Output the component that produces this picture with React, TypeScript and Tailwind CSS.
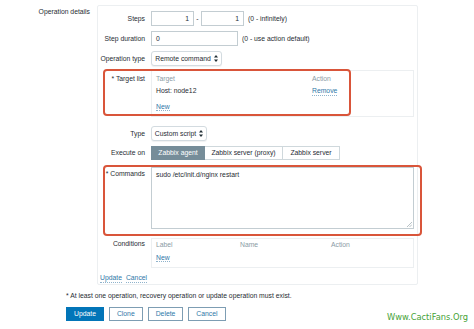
import type { ReactNode } from 'react';

function Arrows() {
  return (
    <svg width="4" height="7" viewBox="0 0 4 7" className="ml-[3px]" aria-hidden="true">
      <path d="M2 0 L4 2.6 L0 2.6 Z" fill="#1f2c33" />
      <path d="M2 7 L4 4.4 L0 4.4 Z" fill="#1f2c33" />
    </svg>
  );
}

function Select({ label, width }: { label: string; width: string }) {
  return (
    <div
      className={`${width} h-[15px] flex items-center justify-center rounded-[3px] border border-[#d3dbe0] bg-white shadow-[0_1px_1px_rgba(0,0,0,0.06)]`}
    >
      {label}
      <Arrows />
    </div>
  );
}

function Row({ label, children, className = '' }: { label: ReactNode; children: ReactNode; className?: string }) {
  return (
    <div className={`flex ${className}`}>
      <div className="w-[47px] shrink-0 text-right">{label}</div>
      <div className="ml-[6px] flex-1">{children}</div>
    </div>
  );
}

function Link({ children }: { children: ReactNode }) {
  return <span className="text-[#2f78a8] border-b border-dotted border-[#8fb3cc] leading-[8px]">{children}</span>;
}

export default function App() {
  return (
    <div className="relative w-[474px] h-[329px] overflow-hidden bg-white font-['Liberation_Sans',Arial,sans-serif] text-[6.8px] leading-[8px] text-[#1f2c33]">
      <div className="flex pt-[5px]">
        <div className="w-[97px] shrink-0 pr-[7px] pt-[3px] text-right">Operation details</div>

        <div className="w-[321px] h-[280px] border border-[#eceff1] rounded-[2px] flex flex-col">
          <Row label="Steps" className="mt-[5px] items-center">
            <div className="flex items-center">
              <div className="w-[43px] h-[15px] border border-[#c3cdd2] flex items-center justify-end pr-[4px]">1</div>
              <span className="w-[7px] text-center">-</span>
              <div className="w-[43px] h-[15px] border border-[#c3cdd2] flex items-center justify-end pr-[4px]">1</div>
              <span className="ml-[4px]">(0 - infinitely)</span>
            </div>
          </Row>

          <Row label="Step duration" className="mt-[5px] items-center">
            <div className="flex items-center">
              <div className="w-[87px] h-[15px] border border-[#c3cdd2] flex items-center pl-[4px]">0</div>
              <span className="ml-[4px]">(0 - use action default)</span>
            </div>
          </Row>

          <Row label="Operation type" className="mt-[5px] items-center">
            <Select label="Remote command" width="w-[71px]" />
          </Row>

          <Row label={<span className="block pt-[5px]">* Target list</span>} className="mt-[4px]">
            <div className="h-[47px] mr-[3px] border border-[#eceff1] pl-[4px] pt-[4px]">
              <div className="flex text-[#8a9ba5]">
                <span className="w-[156px]">Target</span>
                <span>Action</span>
              </div>
              <div className="flex mt-[4px]">
                <span className="w-[156px]">Host: node12</span>
                <Link>Remove</Link>
              </div>
              <div className="mt-[7px]">
                <Link>New</Link>
              </div>
            </div>
          </Row>

          <Row label="Type" className="mt-[9px] items-center">
            <Select label="Custom script" width="w-[56px]" />
          </Row>

          <Row label="Execute on" className="mt-[5px] items-center">
            <div className="flex h-[14px]">
              <div className="w-[54px] flex items-center justify-center bg-[#768d99] text-white border border-[#768d99]">Zabbix agent</div>
              <div className="w-[78px] flex items-center justify-center border border-l-0 border-[#cfd8dc]">Zabbix server (proxy)</div>
              <div className="w-[57px] flex items-center justify-center border border-l-0 border-[#cfd8dc]">Zabbix server</div>
            </div>
          </Row>

          <Row label={<span className="block pt-[3px]">* Commands</span>} className="mt-[7px]">
            <div className="relative h-[62px] mr-[3px] border border-[#c3cdd2] pl-[4px] pt-[3px]">
              sudo /etc/init.d/nginx restart
              <svg width="5" height="5" viewBox="0 0 5 5" className="absolute right-[1px] bottom-[1px]" aria-hidden="true">
                <path d="M5 0 L0 5 M5 2.5 L2.5 5" stroke="#9aa7ae" strokeWidth="0.7" />
              </svg>
            </div>
          </Row>

          <Row label={<span className="block pt-[2px]">Conditions</span>} className="mt-[9px]">
            <div className="h-[30px] mr-[3px] border border-[#eceff1] pl-[4px] pt-[2px]">
              <div className="flex text-[#8a9ba5]">
                <span className="w-[84px]">Label</span>
                <span className="w-[91px]">Name</span>
                <span>Action</span>
              </div>
              <div className="mt-[5px]">
                <Link>New</Link>
              </div>
            </div>
          </Row>

          <div className="mt-[6px] pl-[2px] flex gap-[4px]">
            <Link>Update</Link>
            <Link>Cancel</Link>
          </div>
        </div>
      </div>

      <div className="pl-[66px] mt-[7px]">* At least one operation, recovery operation or update operation must exist.</div>

      <div className="pl-[66px] mt-[7px] flex gap-[5px] h-[14px]">
        <div className="px-[7px] flex items-center bg-[#0275b8] text-white border border-[#0275b8]">Update</div>
        <div className="px-[7px] flex items-center border border-[#7d9db3] text-[#2f78a8]">Clone</div>
        <div className="px-[7px] flex items-center border border-[#7d9db3] text-[#2f78a8]">Delete</div>
        <div className="px-[7px] flex items-center border border-[#7d9db3] text-[#2f78a8]">Cancel</div>
      </div>

      {/* annotation boxes over the form */}
      <div className="absolute left-[103px] top-[69px] w-[248px] h-[47px] border-2 border-[#d9553a] rounded-[4px]" />
      <div className="absolute left-[103px] top-[165px] w-[319px] h-[71px] border-2 border-[#d9553a] rounded-[4px]" />

      <div className="absolute left-[387px] top-[312px] font-['DejaVu_Sans',sans-serif] text-[8.3px] leading-[11px] text-[#45a236]">
        Www.CactiFans.Org
      </div>
    </div>
  );
}
